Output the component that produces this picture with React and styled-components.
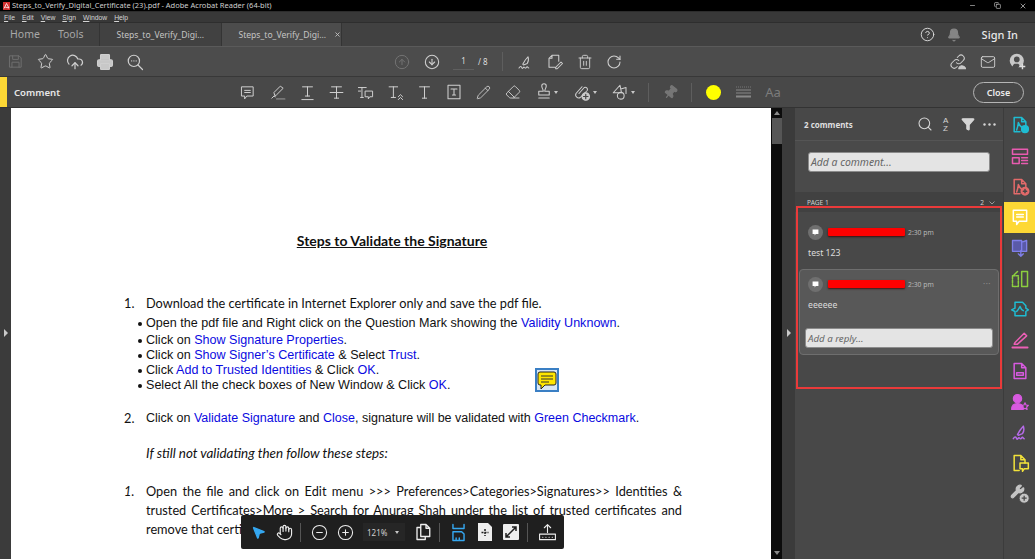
import styled, { createGlobalStyle } from "styled-components";
import { Star, CloudUpload, Printer, CircleArrowUp, CircleArrowDown, Trash2, RotateCw, Mail, CircleHelp, Bell, Search, Filter, Pencil, Eraser, Pin, Hand, MousePointer2, CircleMinus, CirclePlus, Copy, Minus, X, Wrench } from "lucide-react";

const Global = createGlobalStyle`
  html, body { margin: 0; padding: 0; height: 100%; overflow: hidden; background: #3a3a3a; }
  * { box-sizing: border-box; }
  #root { height: 100%; }
`;

const Shell = styled.div`
  position: relative;
  width: 1035px;
  height: 559px;
  display: flex;
  flex-direction: column;
  overflow: hidden;
  font-family: "Noto Sans", "Open Sans", sans-serif;
  color: #ddd;
`;

const TitleBar = styled.div`
  height: 11px;
  background: #000;
  display: flex;
  align-items: center;
  padding-left: 3px;
  color: #cfcfcf;
  font-size: 7.5px;
  line-height: 11px;
`;

const TitleText = styled.span`
  margin-left: 2px;
  flex: 1;
  white-space: nowrap;
`;

const WinControls = styled.div`
  display: flex;
  width: 75px;
  color: #ddd;
  & > * { flex: 1; display: flex; justify-content: center; }
`;

const MenuBar = styled.div`
  height: 11px;
  background: #383838;
  display: flex;
  gap: 7px;
  padding-left: 4px;
  font-family: "Liberation Sans", Arial, sans-serif;
  font-size: 6.8px;
  line-height: 11px;
  color: #d4d4d4;
  border-top: 1px solid #2c2c2c;
  & u { text-decoration: underline; text-underline-offset: 1px; }
`;

const TabBar = styled.div`
  height: 24px;
  background: #414141;
  border-top: 1px solid #2e2e2e;
  display: flex;
  align-items: stretch;
`;

const NavTab = styled.div`
  font-size: 10.5px;
  color: #a8a8a8;
  line-height: 22px;
  padding-left: ${(p) => p.$pad}px;
`;

const DocTab = styled.div`
  width: ${(p) => p.$width}px;
  margin-left: ${(p) => p.$left || 0}px;
  display: flex;
  align-items: center;
  gap: 8px;
  padding-left: 16px;
  font-size: 8.6px;
  color: #c4c4c4;
  white-space: nowrap;
  background: ${(p) => (p.$active ? "#4c4c4c" : "transparent")};
  border-left: 1px solid #343434;
  border-right: ${(p) => (p.$active ? "1px solid #343434" : "none")};
`;

const TabRight = styled.div`
  margin-left: auto;
  display: flex;
  align-items: center;
  padding-right: 17px;
  color: #e8e8e8;
  font-size: 11px;
  font-weight: 500;
`;

const SignIn = styled.span`
  margin-left: 14px;
`;

const Tool = styled.span`
  width: ${(p) => p.$w || 30}px;
  flex: none;
  display: inline-flex;
  align-items: center;
  justify-content: center;
  color: ${(p) => p.$color || "#cfcfcf"};
  margin-left: ${(p) => p.$left || 0}px;
`;

const MainToolbar = styled.div`
  height: 31px;
  background: #4c4c4c;
  border-top: 1px solid #5a5a5a;
  border-bottom: 1px solid #383838;
  display: flex;
  align-items: center;
`;

const PageBox = styled.span`
  width: 21px;
  margin-left: 6px;
  text-align: center;
  font-size: 8px;
  color: #ddd;
  border-bottom: 1px solid #5f5f5f;
  line-height: 16px;
`;

const PageTotal = styled.span`
  margin-left: 4px;
  width: 24px;
  font-size: 8px;
  color: #ddd;
`;

const Sep = styled.span`
  width: 1px;
  height: ${(p) => p.$h || 19}px;
  background: ${(p) => p.$c || "#5e5e5e"};
  flex: none;
  margin-left: ${(p) => p.$left || 0}px;
`;

const CommentBar = styled.div`
  height: 31px;
  background: #484848;
  border-bottom: 1px solid #333;
  display: flex;
  align-items: center;
`;

const YellowTab = styled.span`
  width: 7px;
  height: 100%;
  background: #fdd835;
  flex: none;
`;

const CommentLabel = styled.span`
  width: 225px;
  padding-left: 7px;
  font-size: 9.6px;
  font-weight: 600;
  color: #e6e6e6;
  flex: none;
`;

const Dot = styled.span`
  width: 15px;
  height: 15px;
  border-radius: 50%;
  background: #ffff00;
  flex: none;
  margin-left: 14px;
`;

const Aa = styled.span`
  width: 30px;
  text-align: center;
  font-size: 13px;
  color: #7c7c7c;
  flex: none;
`;

const CloseButton = styled.span`
  width: 51px;
  height: 21px;
  margin-left: 185px;
  border: 1px solid #b5b5b5;
  border-radius: 11px;
  font-size: 9px;
  font-weight: 600;
  color: #ececec;
  display: flex;
  align-items: center;
  justify-content: center;
  flex: none;
`;

const Workspace = styled.div`
  flex: 1;
  min-height: 0;
  display: flex;
`;

const Gutter = styled.div`
  width: ${(p) => p.$w}px;
  background: #3b3b3b;
  flex: none;
  display: flex;
  align-items: center;
  justify-content: center;
  padding-bottom: 1px;
`;

const Handle = styled.span`
  width: 0;
  height: 0;
  border-left: 4px solid #c9c9c9;
  border-top: 4px solid transparent;
  border-bottom: 4px solid transparent;
`;

const Page = styled.div`
  width: 760px;
  flex: none;
  background: #fff;
  color: #111;
  padding: 124px 89px 0 113px;
  overflow: hidden;
  font-family: Lato, "Liberation Sans", sans-serif;
  font-size: 12.75px;
`;

const DocTitle = styled.div`
  text-align: center;
  font-size: 14px;
  font-weight: 700;
  line-height: 18px;
  text-decoration: underline;
  margin-bottom: 44px;
  padding-right: 22px;
`;

const NumRow = styled.div`
  display: flex;
  line-height: 19px;
  margin-bottom: ${(p) => p.$after || 0}px;
`;

const Num = styled.span`
  width: 22px;
  flex: none;
  font-size: 12.75px;
  font-style: ${(p) => (p.$italic ? "italic" : "normal")};
`;

const Para = styled.span`
  flex: 1;
`;

const ArialPara = styled(Para)`
  font-family: "Liberation Sans", Arial, sans-serif;
  font-size: 12.5px;
`;

const ItalicPara = styled(Para)`
  font-style: italic;
  font-size: 13.4px;
`;

const JustLine = styled.span`
  display: block;
  text-align: ${(p) => (p.$last ? "left" : "justify")};
  text-align-last: ${(p) => (p.$last ? "left" : "justify")};
`;

const Bullets = styled.ul`
  list-style: none;
  margin: 0 0 16px;
  padding: 3px 0 0 22px;
  font-family: "Liberation Sans", Arial, sans-serif;
  font-size: 12.57px;
`;

const BulletItem = styled.li`
  position: relative;
  height: 15px;
  line-height: 15px;
  white-space: nowrap;
  &:first-child { margin-bottom: 1.5px; }
  &::before {
    content: "";
    position: absolute;
    left: -8px;
    top: 6px;
    width: 4px;
    height: 4px;
    border-radius: 50%;
    background: #111;
  }
`;

const Blue = styled.span`
  color: #0a0adf;
`;

const StickyNote = styled.span`
  position: absolute;
  left: 535px;
  top: 368px;
  width: 24px;
  height: 24px;
  border: 2px solid #3a7fc4;
  background: #d8e6f2;
  display: flex;
  align-items: center;
  justify-content: center;
`;

const Scrollbar = styled.div`
  width: 11px;
  flex: none;
  background: #0c0c0c;
  display: flex;
  flex-direction: column;
  align-items: center;
  justify-content: space-between;
  padding-top: 3px;
  position: relative;
`;

const ScrollThumb = styled.span`
  position: absolute;
  top: 10px;
  left: 1px;
  width: 10px;
  height: 26px;
  background: #565656;
`;

const Arrow = styled.span`
  width: 0;
  height: 0;
  border-left: 3px solid transparent;
  border-right: 3px solid transparent;
  ${(p) => (p.$down ? "border-top: 4px solid #8a8a8a; margin-bottom: 4px;" : "border-bottom: 4px solid #8a8a8a;")}
`;

const Panel = styled.div`
  width: 208px;
  flex: none;
  background: #484848;
  display: flex;
  flex-direction: column;
`;

const PanelHead = styled.div`
  height: 33px;
  display: flex;
  align-items: center;
  padding-left: 9px;
  border-bottom: 1px solid #555;
  background: #484848;
`;

const PanelCount = styled.span`
  width: 110px;
  font-size: 8px;
  font-weight: 700;
  color: #dfdfdf;
`;

const PanelTool = styled.span`
  width: 21.5px;
  display: inline-flex;
  justify-content: center;
  color: #d5d5d5;
`;

const AddSection = styled.div`
  height: 51px;
  padding: 11px 13px 0;
  background: #4a4a4a;
`;

const InputBox = styled.div`
  height: 20px;
  background: #e4e4e4;
  border: 1px solid #8b8b8b;
  border-radius: 3px;
  color: #666;
  font-size: ${(p) => p.$fs}px;
  font-style: italic;
  padding-left: 2px;
  line-height: 19px;
`;

const PageHead = styled.div`
  height: 20px;
  background: #414141;
  display: flex;
  justify-content: space-between;
  align-items: center;
  padding: 1px 8px 0 12px;
  font-size: 6.6px;
  color: #cfcfcf;
`;

const PageCount = styled.span`
  display: flex;
  align-items: center;
  gap: 5px;
`;

const CommentList = styled.div`
  flex: 1;
  padding: 0 4px;
`;

const CommentItem = styled.div`
  height: ${(p) => (p.$selected ? 86 : 57)}px;
  padding: ${(p) => (p.$selected ? "6px 5px 0" : "11px 5px 0")};
  background: ${(p) => (p.$selected ? "#585858" : "transparent")};
  border: 1px solid ${(p) => (p.$selected ? "#6e6e6e" : "transparent")};
  border-radius: 4px;
`;

const CommentHead = styled.div`
  display: flex;
  align-items: center;
  padding-left: 3px;
  height: 16px;
`;

const Avatar = styled.span`
  width: 15px;
  height: 15px;
  border-radius: 50%;
  background: #6f6f6f;
  display: flex;
  align-items: center;
  justify-content: center;
  flex: none;
`;

const Redacted = styled.span`
  width: 77px;
  height: 8px;
  margin-left: 5px;
  background: #ff0000;
  border-radius: 1px;
  box-shadow: 0 1px 2px rgba(60, 0, 0, 0.8);
  flex: none;
`;

const Time = styled.span`
  margin-left: 3px;
  font-size: 6.8px;
  color: #b9b9b9;
  flex: 1;
`;

const More = styled.span`
  color: #8f8f8f;
  font-size: 8px;
  letter-spacing: 0.5px;
  padding-right: 2px;
  line-height: 6px;
`;

const CommentBody = styled.div`
  margin-top: ${(p) => p.$top}px;
  height: ${(p) => p.$h}px;
  padding-left: 3px;
  font-size: 8.7px;
  line-height: 12px;
  color: #dcdcdc;
`;

const Rail = styled.div`
  flex: 1;
  background: #474747;
  border-left: 1px solid #3c3c3c;
  padding-top: 2px;
  display: flex;
  flex-direction: column;
`;

const RailItem = styled.div`
  height: 30.7px;
  display: flex;
  align-items: center;
  justify-content: center;
  padding-left: 1px;
  background: ${(p) => (p.$active ? "#fdd835" : "transparent")};
`;

const RedFrame = styled.div`
  position: absolute;
  left: 796px;
  top: 206px;
  width: 206px;
  height: 183px;
  border: 2px solid #ea3a3a;
  pointer-events: none;
`;

const FloatBar = styled.div`
  position: absolute;
  left: 241px;
  top: 515px;
  width: 323px;
  height: 34px;
  background: #1f1f1f;
  border-radius: 2px;
  display: flex;
  align-items: center;
  padding-left: 4px;
`;

const ZoomBox = styled.span`
  width: 42px;
  height: 18px;
  margin-left: 5px;
  background: #262626;
  color: #cfcfcf;
  font-size: 8px;
  display: flex;
  align-items: center;
  padding-left: 4px;
  gap: 8px;
  flex: none;
`;

const Caret = styled.span`
  width: 0;
  height: 0;
  margin-left: ${(p) => p.$left || 0}px;
  border-left: 2.5px solid transparent;
  border-right: 2.5px solid transparent;
  border-top: 3px solid ${(p) => p.$color || "#c8c8c8"};
  flex: none;
`;

const Draw = ({ size = 18, color = "currentColor", width = 1.4, children, fill = "none" }) => (
  <svg width={size} height={size} viewBox="0 0 24 24" fill={fill} stroke={color} strokeWidth={width} strokeLinecap="round" strokeLinejoin="round">
    {children}
  </svg>
);

const bubble = <path d="M4 4h16v13h-9l-3 4v-4H4z" />;
const page = <path d="M5 20V3h9l5 5v5M14 3v5h5M5 20h7" />;
const sign = <path d="M9 15c2-4 4-7 7-10 1 3 1 6-1 9l-5 2zM4 20c2-3 3-2 4 0s2-2 3-1 2 2 3 0 2 1 3 1" />;
const acrobat = <path d="M8 18c1-3 2-6 2-9 1 3 2 5 5 6" />;

export default function App() {
  return (
    <Shell>
      <Global />
      <TitleBar>
        <svg width="7" height="8" viewBox="0 0 7 8"><rect width="7" height="8" fill="#d3302f" /><path d="M1 6.5 3.5 1.5 6 6 2 5" fill="none" stroke="#fff" strokeWidth=".8" /></svg>
        <TitleText>Steps_to_Verify_Digital_Certificate (23).pdf - Adobe Acrobat Reader (64-bit)</TitleText>
        <WinControls>
          <span><Minus size={7} /></span>
          <span><Copy size={7} /></span>
          <span><X size={8} /></span>
        </WinControls>
      </TitleBar>
      <MenuBar>
        <span><u>F</u>ile</span>
        <span><u>E</u>dit</span>
        <span><u>V</u>iew</span>
        <span><u>S</u>ign</span>
        <span><u>W</u>indow</span>
        <span><u>H</u>elp</span>
      </MenuBar>
      <TabBar>
        <NavTab $pad={10}>Home</NavTab>
        <NavTab $pad={18}>Tools</NavTab>
        <DocTab $width={122} $left={16}>Steps_to_Verify_Digi...</DocTab>
        <DocTab $width={121} $active>Steps_to_Verify_Digi... <X size={7} strokeWidth={3} /></DocTab>
        <TabRight>
          <Tool $color="#ddd" $w={27}><CircleHelp size={15} strokeWidth={1.5} /></Tool>
          <Tool $color="#858585" $w={27}><Bell size={14} fill="#858585" /></Tool>
          <SignIn>Sign In</SignIn>
        </TabRight>
      </TabBar>
      <MainToolbar>
        <Tool $color="#6f6f6f">
          <Draw size={17}><path d="M4 4h13l3 3v13H4zM8 4v5h8V4M7 20v-7h10v7" /></Draw>
        </Tool>
        <Tool><Star size={17} strokeWidth={1.4} /></Tool>
        <Tool><CloudUpload size={18} strokeWidth={1.6} /></Tool>
        <Tool><Printer size={18} fill="#c8c8c8" strokeWidth={1.4} /></Tool>
        <Tool>
          <Draw size={18} width={1.6}><circle cx="10.5" cy="10.5" r="7.5" /><path d="m16 16 6 6M7.5 10.5h.1M10.5 10.5h.1M13.5 10.5h.1" /></Draw>
        </Tool>
        <Tool $left={237} $color="#737373"><CircleArrowUp size={16} strokeWidth={1.5} /></Tool>
        <Tool><CircleArrowDown size={16} strokeWidth={1.6} /></Tool>
        <PageBox>1</PageBox>
        <PageTotal>/ 8</PageTotal>
        <Sep />
        <Tool $left={7}><Draw size={18}>{sign}</Draw></Tool>
        <Tool><Draw size={18}><path d="M4 7h4V3h9v8M8 3 4 7v12h8M13 19l7-7 2 2-7 7h-2z" /></Draw></Tool>
        <Tool><Trash2 size={16} strokeWidth={1.4} /></Tool>
        <Tool $w={28}><RotateCw size={16} strokeWidth={1.6} /></Tool>
        <Tool $left={315}>
          <Draw size={18}><path d="M10 13a4 4 0 0 0 6 0l3-3a4 4 0 0 0-6-6l-2 2M13 10a4 4 0 0 0-6 0l-3 3a4 4 0 0 0 6 6l1-1" /><path d="M13 21c0-3 3-4 4-4s5 1 5 4z" fill="#c8c8c8" /></Draw>
        </Tool>
        <Tool><Mail size={16} strokeWidth={1.4} /></Tool>
        <Tool $w={29}>
          <svg width="17" height="17" viewBox="0 0 24 24"><circle cx="11" cy="11" r="10" fill="#c8c8c8" /><circle cx="11" cy="9" r="4" fill="#4c4c4c" /><path d="M5 19c1-4 3-4 6-4s3 1 4 2l-2 5H8z" fill="#4c4c4c" /><path d="M19 15v8M15 19h8" stroke="#ddd" strokeWidth="2" /></svg>
        </Tool>
      </MainToolbar>
      <CommentBar>
        <YellowTab />
        <CommentLabel>Comment</CommentLabel>
        <Tool><Draw size={17}>{bubble}<path d="M8 9h8M8 12h8" /></Draw></Tool>
        <Tool><Draw size={17}><path d="M8 16 7 12 16 3l4 3-9 9zM4 20l3-3 2 1" /><path d="M11 21h11" stroke="#777" strokeWidth="2.5" /></Draw></Tool>
        <Tool><Draw size={17}><path d="M5 4h14M12 4v13M9 17h6M4 22h16" /></Draw></Tool>
        <Tool $w={29}><Draw size={17}><path d="M5 4h14M12 4v16M9 20h6M3 12h18" /></Draw></Tool>
        <Tool $w={29}><Draw size={17}><path d="M2 5h11M7 5v14M5 19h4M2 10h3" /><path d="M12 10h10v8h-4l-2 3v-3h-4z" /></Draw></Tool>
        <Tool><Draw size={17}><path d="M3 4h12M9 4v15M6 19h6M16 18l3-3 3 3M16 22l3-3 3 3" /></Draw></Tool>
        <Tool $w={29}><Draw size={17}><path d="M5 4h14M12 4v16M9 20h6" /></Draw></Tool>
        <Tool $w={29}><Draw size={18}><path d="M4 3h16v18H4zM8 8h8M12 8v8M10 16h4" /></Draw></Tool>
        <Tool><Pencil size={15} strokeWidth={1.4} /></Tool>
        <Tool><Eraser size={16} strokeWidth={1.4} /></Tool>
        <Tool $w={36}><Draw size={18}><path d="M9 4a3 3 0 0 1 6 0c0 3-2 4-2 7h6v5H5v-5h6c0-3-2-4-2-7zM5 20h14" /></Draw><Caret $left={1} /></Tool>
        <Tool $w={41}><Draw size={18}><path d="m8 14 7-8a3 3 0 0 1 4 4l-9 9a4 4 0 0 1-6-5l8-9" /><circle cx="17" cy="18" r="5" fill="#c8c8c8" /><path d="M17 15v6M14 18h6" stroke="#484848" strokeWidth="1.6" /></Draw><Caret $left={2} /></Tool>
        <Tool $w={35}><Draw size={18}><path d="M12 3 3 13h11zM13 8l7-2v8" /><circle cx="13" cy="17" r="4.5" /></Draw><Caret $left={2} /></Tool>
        <Sep $left={8} />
        <Tool $w={42} $color="#767676"><Pin size={15} fill="#767676" style={{ transform: "rotate(40deg)" }} /></Tool>
        <Sep />
        <Dot />
        <Tool $left={7}>
          <svg width="15" height="12" viewBox="0 0 15 12"><path d="M0 1h15" stroke="#777" strokeDasharray="1 1" /><path d="M0 4h15M0 7h15" stroke="#888" /><path d="M0 10.5h15" stroke="#888" strokeWidth="2" /></svg>
        </Tool>
        <Aa>Aa</Aa>
        <CloseButton>Close</CloseButton>
      </CommentBar>
      <Workspace>
        <Gutter $w={11}><Handle /></Gutter>
        <Page>
          <DocTitle>Steps to Validate the Signature</DocTitle>
          <NumRow>
            <Num>1.</Num>
            <Para>Download the certificate in Internet Explorer only and save the pdf file.</Para>
          </NumRow>
          <Bullets>
            <BulletItem>Open the pdf file and Right click on the Question Mark showing the <Blue>Validity Unknown</Blue>.</BulletItem>
            <BulletItem>Click on <Blue>Show Signature Properties</Blue>.</BulletItem>
            <BulletItem>Click on <Blue>Show Signer’s Certificate</Blue> &amp; Select <Blue>Trust</Blue>.</BulletItem>
            <BulletItem>Click <Blue>Add to Trusted Identities</Blue> &amp; Click <Blue>OK</Blue>.</BulletItem>
            <BulletItem>Select All the check boxes of New Window &amp; Click <Blue>OK</Blue>.</BulletItem>
          </Bullets>
          <NumRow $after={16}>
            <Num>2.</Num>
            <ArialPara>Click on <Blue>Validate Signature</Blue> and <Blue>Close</Blue>, signature will be validated with <Blue>Green Checkmark</Blue>.</ArialPara>
          </NumRow>
          <NumRow $after={19}>
            <Num />
            <ItalicPara>If still not validating then follow these steps:</ItalicPara>
          </NumRow>
          <NumRow>
            <Num $italic>1.</Num>
            <Para>
              <JustLine>Open the file and click on Edit menu &gt;&gt;&gt; Preferences&gt;Categories&gt;Signatures&gt;&gt; Identities &amp;</JustLine>
              <JustLine>trusted Certificates&gt;More &gt; Search for Anurag Shah under the list of  trusted certificates and</JustLine>
              <JustLine $last>remove that certificate.</JustLine>
            </Para>
          </NumRow>
        </Page>
        <Scrollbar>
          <Arrow />
          <ScrollThumb />
          <Arrow $down />
        </Scrollbar>
        <Gutter $w={13}><Handle /></Gutter>
        <Panel>
          <PanelHead>
            <PanelCount>2 comments</PanelCount>
            <PanelTool><Search size={16} strokeWidth={1.6} /></PanelTool>
            <PanelTool>
              <svg width="9" height="18" viewBox="0 0 9 18"><text x="1" y="8" fontSize="8" fill="#d5d5d5" fontFamily="Liberation Sans">A</text><text x="1" y="16" fontSize="8" fill="#d5d5d5" fontFamily="Liberation Sans">Z</text></svg>
            </PanelTool>
            <PanelTool><Filter size={14} fill="#d5d5d5" /></PanelTool>
            <PanelTool>
              <svg width="13" height="3" viewBox="0 0 13 3"><circle cx="1.5" cy="1.5" r="1.2" fill="#d5d5d5" /><circle cx="6.5" cy="1.5" r="1.2" fill="#d5d5d5" /><circle cx="11.5" cy="1.5" r="1.2" fill="#d5d5d5" /></svg>
            </PanelTool>
          </PanelHead>
          <AddSection>
            <InputBox $fs={10.4}>Add a comment...</InputBox>
          </AddSection>
          <PageHead>
            <span>PAGE 1</span>
            <PageCount>2 <svg width="6" height="4" viewBox="0 0 6 4"><path d="m.5.5 2.5 2.5L5.500.5" fill="none" stroke="#999" /></svg></PageCount>
          </PageHead>
          <CommentList>
            <CommentItem>
              <CommentHead>
                <Avatar><svg width="7" height="7" viewBox="0 0 24 24"><path d="M2 2h20v15h-9l-4 5v-5H2z" fill="#fff" /></svg></Avatar>
                <Redacted />
                <Time>2:30 pm</Time>
              </CommentHead>
              <CommentBody $top={7} $h={12}>test 123</CommentBody>
            </CommentItem>
            <CommentItem $selected>
              <CommentHead>
                <Avatar><svg width="7" height="7" viewBox="0 0 24 24"><path d="M2 2h20v15h-9l-4 5v-5H2z" fill="#fff" /></svg></Avatar>
                <Redacted />
                <Time>2:30 pm</Time>
                <More>···</More>
              </CommentHead>
              <CommentBody $top={7} $h={29}>eeeeee</CommentBody>
              <InputBox $fs={9.7}>Add a reply...</InputBox>
            </CommentItem>
          </CommentList>
        </Panel>
        <Rail>
          <RailItem><Draw size={20} width={1.8} color="#1fbcd2">{page}{acrobat}<circle cx="18" cy="17" r="4" fill="#1fbcd2" /></Draw></RailItem>
          <RailItem><Draw size={20} width={1.8} color="#e85bb0"><path d="M3 4h18v6H3zM3 14h8v7H3zM14 14h7M14 17.500h7M14 21h7" /></Draw></RailItem>
          <RailItem><Draw size={20} width={1.8} color="#e36a6a">{page}{acrobat}<circle cx="18" cy="17" r="4.500" fill="#e36a6a" /><path d="M16 17h4M18 15v4" stroke="#474747" /></Draw></RailItem>
          <RailItem $active><Draw size={20} color="#fff" width={1.8}>{bubble}<path d="M8 9h8M8 12h8" /></Draw></RailItem>
          <RailItem><Draw size={20} width={1.6} color="#7f7fe8" fill="#5a5aa8"><path d="M3 3h11v13H3zM14 5l6-2v13h-6z" /><path d="M13 15v7M10 19l3 3 3-3" fill="none" /></Draw></RailItem>
          <RailItem><Draw size={20} width={1.8} color="#8ccf3f"><path d="M3 8h7v13H3zM9 3 5 7" strokeDasharray="3 1.500" /><path d="M14 3h7v18h-7z" /></Draw></RailItem>
          <RailItem><Draw size={20} width={1.8} color="#1fbcd2"><path d="M6 4h9l4 4v3l3 2-3 2v5H6v-5l-4-2 4-2zM8 15c2-2 3-4 4-6 1 3 2 4 4 5" /></Draw></RailItem>
          <RailItem><Draw size={20} width={1.8} color="#ec5fb5"><path d="M6 15 17 4l3 3-11 10H5z" /><path d="M3 21h18" strokeWidth="2.500" /></Draw></RailItem>
          <RailItem><Draw size={20} width={1.8} color="#d85ae0"><path d="M5 3h9l5 5v13H5zM14 3v5h5M8 14h8v3H8z" /></Draw></RailItem>
          <RailItem><Draw size={20} color="#d85ae0" fill="#d85ae0"><circle cx="9" cy="8" r="5" /><path d="M2 21c0-5 3-7 7-7s5 1 6 3v4z" /><path d="m18 13 1.300 2.600 2.700.4-2 2 .5 3-2.500-1.400-2.500 1.400.5-3-2-2 2.700-.4z" fill="#474747" /></Draw></RailItem>
          <RailItem><Draw size={20} width={1.8} color="#b66be8">{sign}</Draw></RailItem>
          <RailItem><Draw size={20} color="#f2e23a" width={1.8}><path d="M5 3h8l5 5v4M5 3v18h6M13 3v5h5" /><path d="M12 12h10v7h-5l-2 3v-3h-3z" /></Draw></RailItem>
          <RailItem>
            <svg width="20" height="20" viewBox="0 0 24 24">
              <foreignObject width="18" height="18"><Wrench size={18} fill="#c4c4c4" color="#c4c4c4" /></foreignObject>
              <circle cx="17" cy="17" r="6" fill="#c4c4c4" stroke="#474747" />
              <path d="M17 14v6M14 17h6" stroke="#474747" strokeWidth="1.500" />
            </svg>
          </RailItem>
        </Rail>
      </Workspace>
      <RedFrame />
      <StickyNote>
        <svg width="20" height="19" viewBox="0 0 20 19"><path d="M3 1h14q2 0 2 2v9q0 2-2 2H8l-4 4v-4H3q-2 0-2-2V3q0-2 2-2z" fill="#ffe600" stroke="#222" /><path d="M4 5h12M4 8h12M4 11h8" stroke="#333" /></svg>
      </StickyNote>
      <FloatBar>
        <Tool $w={26} $color="#35a7f0"><MousePointer2 size={15} fill="#35a7f0" /></Tool>
        <Tool $w={26} $color="#eee"><Hand size={17} strokeWidth={1.6} /></Tool>
        <Sep $left={3} $c="#555" />
        <Tool $w={26} $left={5} $color="#eee"><CircleMinus size={17} strokeWidth={1.5} /></Tool>
        <Tool $w={26} $color="#eee"><CirclePlus size={17} strokeWidth={1.5} /></Tool>
        <ZoomBox>121% <Caret /></ZoomBox>
        <Tool $w={26} $left={5} $color="#eee">
          <Draw size={18} width={1.8}><path d="M9 2h7l5 5v11H9zM16 2v5h5M9 6H4v16h11v-4" /></Draw>
        </Tool>
        <Sep $left={3} $c="#555" />
        <Tool $w={26} $left={5} $color="#35a7f0"><Draw size={19} width={1.8}><path d="M5 2v5h14V2M5 22V11h11l3 3v8zM9 22v-3M13 22v-3" /></Draw></Tool>
        <Tool $w={27} $color="#eee">
          <svg width="16" height="18" viewBox="0 0 16 18"><path d="M1 0h10l4 4v14H1z" fill="#eee" /><path d="M8 6v7M4.500 9.500h7" stroke="#1f1f1f" strokeWidth="1.500" strokeDasharray="2 1" /></svg>
        </Tool>
        <Tool $w={26} $color="#eee">
          <svg width="16" height="16" viewBox="0 0 16 16"><rect width="16" height="16" rx="1" fill="#eee" /><path d="M3 13 13 3M9 3h4v4M3 9v4h4" fill="none" stroke="#1f1f1f" strokeWidth="1.500" /></svg>
        </Tool>
        <Sep $left={3} $c="#555" />
        <Tool $w={38} $color="#eee"><Draw size={19}><path d="M12 12V2M8 6l4-4 4 4M2 14h20v7H2zM6 18h.1M10 18h.1M14 18h.1M18 18h.1" /></Draw></Tool>
      </FloatBar>
    </Shell>
  );
}
